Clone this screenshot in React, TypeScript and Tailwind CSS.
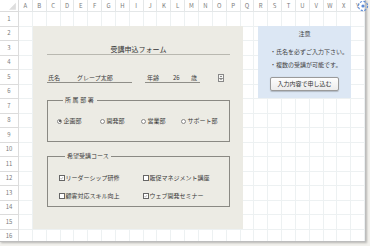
import React from "react";

/* A spreadsheet with a form drawn over it: the sheet grid is real cells,
   the beige form and the blue note are shapes floating above the grid. */

const COLS = "ABCDEFGHIJKLMNOPQRSTUVWXY".split("");
const ROWS = Array.from({ length: 16 }, (_, i) => i + 1);

const depts = [
  { label: "企画部", on: true, w: "w-[43px]" },
  { label: "開発部", on: false, w: "w-[41px]" },
  { label: "営業部", on: false, w: "w-[40px]" },
  { label: "サポート部", on: false, w: "" },
];

const courses = [
  { label: "リーダーシップ研修", on: true },
  { label: "販促マネジメント講座", on: false },
  { label: "顧客対応スキル向上", on: false },
  { label: "ウェブ開発セミナー", on: true },
];

function Radio({ on }: { on: boolean }) {
  return (
    <span className="flex h-[5px] w-[5px] shrink-0 items-center justify-center rounded-full border-[0.6px] border-[#888] bg-white">
      {on && <span className="h-[2px] w-[2px] rounded-full bg-[#333]" />}
    </span>
  );
}

function Check({ on }: { on: boolean }) {
  return (
    <span className="flex h-[5.5px] w-[5.5px] shrink-0 items-center justify-center border-[0.5px] border-[#666] bg-white">
      {on && (
        <svg viewBox="0 0 6 6" className="h-[4.5px] w-[4.5px]">
          <path d="M1 3.2 L2.4 4.6 L5 1.2" fill="none" stroke="#444" strokeWidth="0.7" />
        </svg>
      )}
    </span>
  );
}

function Spinner() {
  return (
    <div className="mb-[1px] mr-[6px] ml-auto flex h-[8px] w-[6px] flex-col border-[0.6px] border-[#888] bg-[#f6f6f3]">
      <svg viewBox="0 0 6 4" className="h-[3.5px] w-full">
        <path d="M1.5 3 L3 1.2 L4.5 3 Z" fill="#444" />
      </svg>
      <div className="h-[0.6px] bg-[#999]" />
      <svg viewBox="0 0 6 4" className="h-[3.5px] w-full">
        <path d="M1.5 1 L3 2.8 L4.5 1 Z" fill="#444" />
      </svg>
    </div>
  );
}

function FormPanel() {
  return (
    <div className="absolute left-[33px] top-[26px] flex h-[203px] w-[210px] flex-col bg-[#ecebe4] px-[14px] pr-[13px] text-[6px] text-[#3a3a3a]">
      {/* title */}
      <div className="border-b-[0.8px] border-[#b9b8b0] pt-[18px] text-center text-[7px] leading-[10px] text-[#333]">
        受講申込フォーム
      </div>

      {/* name / age */}
      <div className="mt-[18px] flex items-end">
        <div className="flex h-[10px] w-[85px] border-b-[0.8px] border-[#8f8e88] leading-[10px]">
          <span className="w-[30px] pl-[1px]">氏名</span>
          <span>グレープ太郎</span>
        </div>
        <div className="ml-[13px] flex h-[10px] w-[55px] border-b-[0.8px] border-[#8f8e88] leading-[10px]">
          <span className="w-[28px] pl-[2px]">年齢</span>
          <span className="w-[18px]">26</span>
          <span>歳</span>
        </div>
        <Spinner />
      </div>

      {/* department */}
      <fieldset className="mt-[13px] border-[0.8px] border-[#8a8983] pb-[16px] pl-[9px] pt-[13px]">
        <legend className="ml-[6px] px-[2px] leading-[8px] tracking-[1.6px]">所属部署</legend>
        <div className="flex items-center leading-[8px]">
          {depts.map((d) => (
            <label key={d.label} className={`flex items-center gap-[1.5px] ${d.w}`}>
              <Radio on={d.on} />
              <span>{d.label}</span>
            </label>
          ))}
        </div>
      </fieldset>

      {/* courses */}
      <fieldset className="mt-[10px] border-[0.8px] border-[#8a8983] pb-[6px] pl-[11px] pt-[14px]">
        <legend className="ml-[6px] px-[2px] leading-[8px]">希望受講コース</legend>
        <div className="grid grid-cols-[84px_1fr] gap-y-[10px] leading-[8px]">
          {courses.map((c) => (
            <label key={c.label} className="flex items-center gap-[1px]">
              <Check on={c.on} />
              <span>{c.label}</span>
            </label>
          ))}
        </div>
      </fieldset>
    </div>
  );
}

function NotePanel() {
  return (
    <div className="absolute left-[258px] top-[26px] flex h-[72px] w-[93px] flex-col bg-[#dce7f4] text-[6px] leading-[8px] text-[#444]">
      <div className="pt-[4px] text-center">注意</div>
      <div className="mt-[10px] pl-[12px]">・氏名を必ずご入力下さい。</div>
      <div className="mt-[5px] pl-[12px]">・複数の受講が可能です。</div>
      <button className="mx-auto mt-[8px] h-[14px] w-[69px] rounded-[2px] border-[0.7px] border-[#9a9a9a] bg-[linear-gradient(#fdfdfd,#ececec)] text-[6px] leading-[12px] text-[#333] shadow-[0_0.5px_1px_rgba(0,0,0,0.2)]">
        入力内容で申し込む
      </button>
    </div>
  );
}

export default function App() {
  return (
    <div className="relative h-[246px] w-[370px] overflow-hidden bg-[#f2f1ed] font-['Noto_Sans_CJK_JP','Noto_Sans',sans-serif]">
      <div className="relative h-[242px] w-[366px] overflow-hidden border-b border-r border-[#bdbdbd] bg-white shadow-[1px_1px_2px_rgba(0,0,0,0.25)]">
        <div className="grid grid-cols-[19px_repeat(25,13.85px)] grid-rows-[12px_repeat(16,14.5px)]">
          {/* corner */}
          <div className="relative border-b border-r border-[#dcdcdc]">
            <svg viewBox="0 0 19 12" className="absolute inset-0 h-full w-full">
              <path d="M17 3 L17 10.5 L9.5 10.5 Z" fill="#dedede" />
            </svg>
          </div>
          {COLS.map((c) => (
            <div
              key={c}
              className="flex items-center justify-center border-b border-r border-[#e4e7e8] text-[6px] leading-none text-[#7c7c7c]"
            >
              {c}
            </div>
          ))}
          {ROWS.map((r) => (
            <React.Fragment key={r}>
              <div className="flex items-center justify-center border-b border-r border-[#dcdcdc] text-[6px] leading-none text-[#7c7c7c]">
                {r}
              </div>
              {COLS.map((c) => (
                <div key={c} className="border-b border-r border-[#edf1f2]" />
              ))}
            </React.Fragment>
          ))}
        </div>

        <FormPanel />
        <NotePanel />
      </div>

      {/* corner tool icon */}
      <svg viewBox="0 0 12 12" className="absolute right-[1px] top-[0px] h-[12px] w-[12px]">
        <circle cx="6" cy="6" r="4.6" fill="none" stroke="#5a8ad6" strokeWidth="1.1" strokeDasharray="2.2 1.4" />
        <circle cx="6" cy="6" r="1.6" fill="#5a8ad6" />
      </svg>
    </div>
  );
}
